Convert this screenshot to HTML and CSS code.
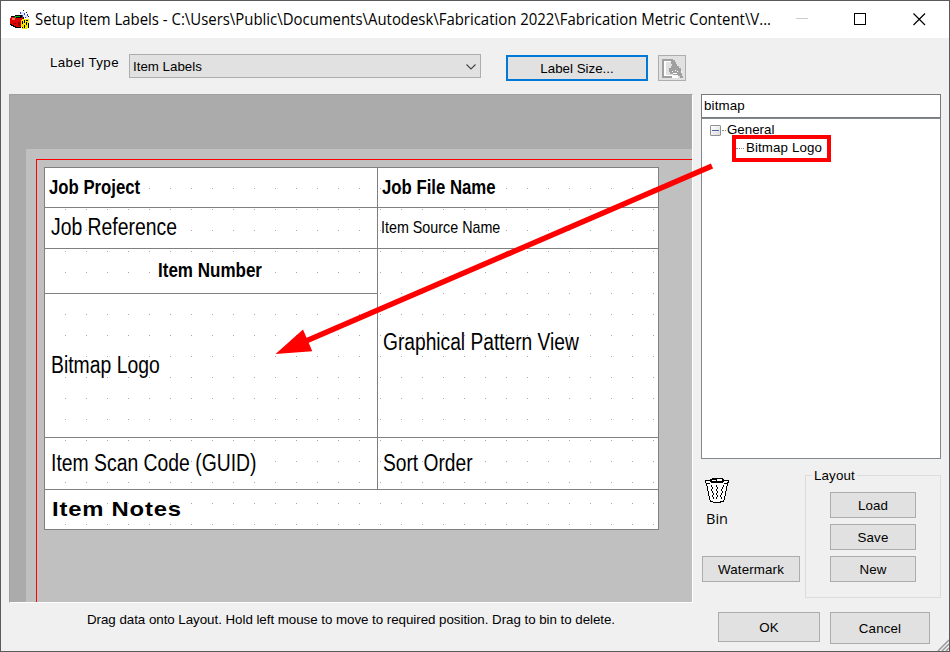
FILE: index.html
```html
<!DOCTYPE html>
<html lang="en">
<head>
<meta charset="utf-8">
<title>Setup Item Labels</title>
<link rel="stylesheet" href="styles.css">
</head>
<body>
<div class="window">
  <header class="titlebar">
    <svg class="app-icon" width="22" height="20" viewBox="0 0 22 20" shape-rendering="crispEdges">
      <path d="M2 6h4V5h7v2h2v2h1v7h-2v1h-2v1H6v-1H4v-1H2v-1H1V8h1z" fill="#000"/>
      <path d="M2 7h5v1h5V7h2v9h-2v1H7v-1H5v-1H3v-1H1V8h1z" fill="#e00000"/>
      <path d="M3 8h3v2H3z" fill="#ff6a5a"/>
      <path d="M6 6h5v1H6zM5 7h2v1H5z" fill="#12a812"/>
      <path d="M9 12h2v4H9zM5 13h2v1H5z" fill="#8c0000"/>
      <path d="M13 9h7v9h-2v1h-5v-2h-1v-7h1z" fill="#f2e800"/>
      <path d="M13 11h1v3h-1zM15 10h1v3h-1zM17 10h2v1h-2zM17 12h1v3h-1zM15 15h1v3h-1zM19 13h1v5h-1zM13 17h1v1h-1z" fill="#000"/>
      <path d="M12 2h3v1h1v3h-1v1h-2V5h-1zM16 5h3v3h-3z" fill="#dfe6f4"/>
      <path d="M11 2h1v2h-1zM13 5h1v2h-1zM15 3h1v2h-1zM18 4h1v2h-1zM16 7h1v1h-1z" fill="#2840d8"/>
      <path d="M14 0h1v1h-1zM17 2h1v1h-1zM19 6h1v1h-1zM12 7h1v1h-1z" fill="#222"/>
    </svg>
    <h1 class="title">Setup Item Labels - C:\Users\Public\Documents\Autodesk\Fabrication 2022\Fabrication Metric Content\V...</h1>
    <svg class="controls" width="130" height="14" viewBox="0 0 130 14">
      <path d="M0 6.500h12" stroke="#ccc"/>
      <rect x="58.500" y="1.500" width="11" height="11" fill="none" stroke="#000"/>
      <path d="M117.500 1.500l11.500 11.500M129 1.500L117.500 13" stroke="#000" stroke-width="1.200"/>
    </svg>
  </header>

  <section class="toolbar">
    <label class="type-label">Label Type</label>
    <div class="combo"><span>Item Labels</span>
      <svg width="10" height="6" viewBox="0 0 10 6"><path d="M.5.500L5 5 9.500.500" fill="none" stroke="#444" stroke-width="1.100"/></svg>
    </div>
    <button class="btn size-btn">Label Size...</button>
    <button class="btn preview-btn">
      <svg width="22" height="21" viewBox="0 0 22 21" shape-rendering="crispEdges">
        <path d="M2 2h11v2h2v3h-2V5h-2V4H5v13h12v3H2z" fill="#fff"/>
        <path d="M1 1h11v1h2v2h1v3h-2V4h-2V3H3v15h8v2H1z" fill="#a0a0a0"/>
        <path d="M10 3h4v3h2v2h2v2h2v5h1v3h1v2h-3v-2h-2v-1h-5v-1H9v-2H8v-4h2V8h1V6h-1z" fill="#a0a0a0"/>
        <path d="M11 13h1v1h-1zM14 12h1v1h-1zM16 13h1v1h-1zM12 15h4v1h-4zM20 13h1v2h-1z" fill="#fff"/>
      </svg>
    </button>
  </section>

  <main class="workspace">
    <section class="left">
      <div class="canvas">
        <div class="paper">
          <div class="margin">
            <div class="sheet">
              <div class="cell project"><span class="t bold">Job Project</span></div>
              <div class="cell file"><span class="t bold file-t">Job File Name</span></div>
              <div class="cell ref"><span class="t">Job Reference</span></div>
              <div class="cell source"><span class="t small">Item Source Name</span></div>
              <div class="cell number"><span class="t bold number-t">Item Number</span></div>
              <div class="cell pattern"><span class="t narrow">Graphical Pattern View</span></div>
              <div class="cell logo"><span class="t">Bitmap Logo</span></div>
              <div class="cell scan"><span class="t">Item Scan Code (GUID)</span></div>
              <div class="cell sort"><span class="t narrow">Sort Order</span></div>
              <div class="cell notes"><span class="t wide">Item Notes</span></div>
            </div>
          </div>
        </div>
      </div>
      <p class="hint"><span>Drag data onto Layout. Hold left mouse to move to required position. Drag to bin to delete.</span></p>
    </section>

    <aside class="side">
      <div class="search">bitmap</div>
      <div class="tree">
        <div class="node"><i class="toggle"></i><i class="dots"></i><span>General</span></div>
        <div class="leaf"><i class="dots"></i><span>Bitmap Logo</span></div>
      </div>
      <div class="tools">
        <div class="bin-col">
          <div class="bin">
            <svg width="24" height="26" viewBox="0 0 24 26" shape-rendering="crispEdges">
              <path d="M2 4h20v4h-1v5h-1v5h-1v4h-1v2h-3v1H8v-1H6v-2H5v-4H4v-5H3V8H2z" fill="#fff"/>
              <path d="M0 2h5V1h2V0h11v1h1v1h5v3h-1v3h-1v5h-1v5h-1v4h-1v2h-3v1H8v-1H5v-2H4v-4H3v-5H2V8H1V5H0z" fill="#000"/>
              <path d="M1 3h4v1h14V3h4v1h-1v4h-1v5h-1v5h-1v4h-1v1h-3v1H8v-1H6v-1H5v-4H4v-5H3V8H2V5H1zM7 2h4v1H7zM12 1h5v2h-5z" fill="#fff"/>
              <path d="M2 5h3v1H2zM6 4h12v1H6zM19 5h3v1h-3z" fill="#000"/>
              <path d="M6.500 7v2h1v2h-1v2h1v2h1v2h-1v2h1v2h1M11.500 7v2h1v2h-1v2h1v2h-1v2h1v2h-1v2M18.500 7v2h-1v2h-1v2h1v2h-1v2h-1v2h1v2h-1" fill="none" stroke="#000" stroke-dasharray="2 1"/>
            </svg>
            <span>Bin</span>
          </div>
          <button class="btn">Watermark</button>
        </div>
        <fieldset class="layout">
          <legend>Layout</legend>
          <button class="btn">Load</button>
          <button class="btn">Save</button>
          <button class="btn">New</button>
        </fieldset>
      </div>
      <div class="actions">
        <button class="btn ok">OK</button>
        <button class="btn cancel">Cancel</button>
      </div>
    </aside>
  </main>
  <svg class="grip" width="12" height="12" viewBox="0 0 12 12"><path d="M1 12L12 1M5 12l7-7M9 12l3-3" stroke="#999" stroke-width="1.500"/></svg>
  <div class="highlight"></div>
  <svg class="arrow" width="950" height="652" viewBox="0 0 950 652">
    <path d="M712 166L306 341" stroke="#f00" stroke-width="5.500"/>
    <path d="M275.500 354L303 329.500 312.300 351.200z" fill="#f00"/>
  </svg>
</div>
</body>
</html>
```
FILE: styles.css
```css
* { box-sizing: border-box; }

body {
  margin: 0;
  font-family: "Liberation Sans", Arial, sans-serif;
  font-size: 13.33px;
  color: #000;
}

.window {
  position: relative;
  width: 950px;
  height: 652px;
  border: 1px solid #5b5959;
  background: #f0f0f0;
  overflow: hidden;
}

.titlebar {
  display: flex;
  align-items: center;
  height: 37px;
  padding-left: 8px;
  background: #fff;
}

.app-icon { flex: none; margin-top: 1px; }

.title {
  width: 761px;
  margin: -1px 0 0 4px;
  font: 400 16px/22px "Open Sans", "Noto Sans", sans-serif;
  white-space: nowrap;
  transform: scaleX(.932);
  transform-origin: left;
}

.controls { flex: none; margin-top: -1px; }

.toolbar {
  display: flex;
  align-items: flex-start;
  height: 56px;
  padding: 16px 0 0 49px;
}

.type-label { width: 79px; line-height: 17px; letter-spacing: .4px; }

.combo {
  display: flex;
  align-items: center;
  justify-content: space-between;
  width: 352px;
  height: 24px;
  margin-right: 25px;
  padding: 1px 4px 0 3px;
  border: 1px solid #adadad;
  background: #e1e1e1;
}

.btn {
  display: block;
  padding: 0;
  border: 1px solid #adadad;
  background: #e1e1e1;
  font: inherit;
  color: #000;
  letter-spacing: .15px;
}

.size-btn {
  width: 142px;
  height: 26px;
  margin: 1px 10px 0 0;
  border: 2px solid #0078d7;
  letter-spacing: 0;
}

.preview-btn { width: 28px; height: 26px; margin-top: 1px; }
.preview-btn svg { display: block; margin: 0 2px; }

.workspace {
  display: grid;
  grid-template-columns: 684px 240px;
  column-gap: 8px;
  padding-left: 8px;
}

.canvas {
  height: 509px;
  padding: 54px 0 0 16px;
  border: 1px solid;
  border-color: #a0a0a0 #fff #fff #a0a0a0;
  background: #ababab;
}

.paper { height: 453px; padding: 10px 0 0 10px; background: #c0c0c0; }

.margin {
  height: 443px;
  padding: 8px 0 0 8px;
  background:
    linear-gradient(#f00, #f00) 0 0 / 100% 1px no-repeat,
    linear-gradient(#f00, #f00) 0 0 / 1px 100% no-repeat;
}

.sheet {
  display: grid;
  grid-template-columns: 333px 281px;
  grid-template-rows: 40px 41px 45px 144px 52px 40px;
  grid-template-areas:
    "project file"
    "ref source"
    "number pattern"
    "logo pattern"
    "scan sort"
    "notes notes";
  width: 615px;
  height: 363px;
  border: solid #808080;
  border-width: 0 1px 1px 0;
  background: #fff conic-gradient(from 0deg at 1px 1px, transparent 75%, #a8a8a8 0) 0 0 / 21px 21px;
}

.cell {
  display: flex;
  align-items: center;
  padding-bottom: 2px;
  border-top: 1px solid #808080;
  border-left: 1px solid #808080;
  white-space: nowrap;
}

.project { grid-area: project; padding-left: 4px; }
.file { grid-area: file; padding-left: 4px; }
.ref { grid-area: ref; padding-left: 6px; }
.source { grid-area: source; padding: 0 0 0 3px; }
.number { grid-area: number; padding-left: 113px; }
.pattern { grid-area: pattern; padding-left: 5px; }
.logo { grid-area: logo; padding-left: 6px; }
.scan { grid-area: scan; padding-left: 6px; }
.sort { grid-area: sort; padding-left: 5px; }
.notes { grid-area: notes; padding-left: 7px; }

.t { font-size: 23px; line-height: 26px; transform: scaleX(.842); transform-origin: left; }
.narrow { transform: scaleX(.834); }
.bold { font-size: 21px; font-weight: 700; transform: scaleX(.797); }
.number-t { transform: scaleX(.81); }
.small { font-size: 17px; }
.wide { font-size: 21px; font-weight: 700; letter-spacing: .7px; transform: scaleX(1.135); }

.hint { margin: 8px 0 0 78px; line-height: 17px; white-space: nowrap; letter-spacing: -.035px; }

.search {
  height: 24px;
  padding: 0 2px;
  border: 1px solid #7a7a7a;
  background: #fff;
  line-height: 22px;
  letter-spacing: .15px;
}

.tree {
  height: 341px;
  padding: 1px 0 0 8px;
  border: 1px solid #828790;
  background: #fff;
}

.node, .leaf { display: flex; align-items: center; height: 18px; }
.leaf { padding-left: 25px; }
.leaf span { letter-spacing: .1px; }

.toggle {
  width: 11px;
  height: 11px;
  margin-top: 3px;
  border: 1px solid #919191;
  border-radius: 1px;
  background: linear-gradient(#4b63a7, #4b63a7) center / 7px 1px no-repeat, linear-gradient(135deg, #fff, #dcdcdc);
}

.dots { width: 4px; margin: 3px 1px 0 1px; border-top: 1px dotted #888; }
.leaf .dots { width: 8px; margin-right: 2px; }

.tools { display: flex; gap: 5px; height: 139px; padding-top: 9px; }

.bin-col { width: 99px; padding: 10px 0 0 1px; }

.bin {
  display: flex;
  flex-direction: column;
  align-items: center;
  width: 30px;
  height: 78px;
  font: 14.5px/20px "Open Sans", sans-serif;
}

.bin span { margin-top: 5px; }
.bin-col .btn { width: 98px; height: 26px; }

.layout {
  display: flex;
  flex-direction: column;
  align-items: center;
  gap: 6px;
  width: 136px;
  height: 130px;
  min-width: 0;
  margin: 0;
  padding: 9px 0 0;
  border: 1px solid #dcdcdc;
}

.layout legend { margin-left: 6px; padding: 0 2px; line-height: 15px; letter-spacing: .15px; }
.layout .btn { width: 86px; height: 26px; }

.actions { display: flex; gap: 10px; padding: 14px 0 0 17px; }
.ok { width: 102px; height: 30px; }
.cancel { width: 100px; height: 32px; }

.grip { position: absolute; right: 0; bottom: 0; }

.highlight {
  position: absolute;
  left: 731px;
  top: 134px;
  width: 99px;
  height: 27px;
  border: 4px solid #f00;
}

.arrow { position: absolute; left: -1px; top: -1px; pointer-events: none; }
```
